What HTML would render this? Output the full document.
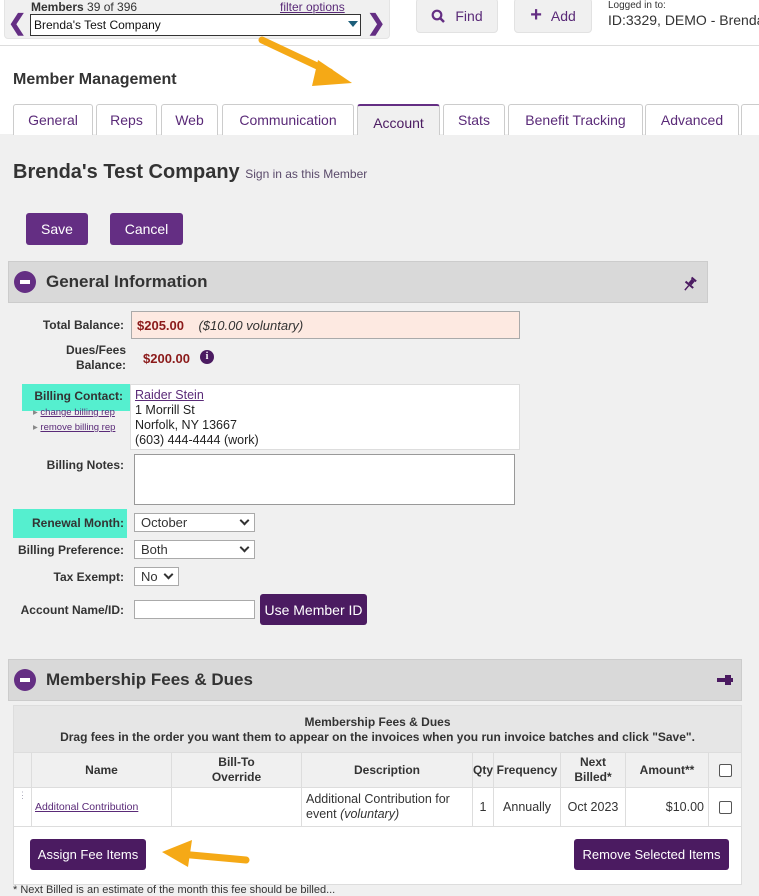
<!DOCTYPE html>
<html><head><meta charset="utf-8"><style>
*{box-sizing:border-box;margin:0;padding:0}
body{width:759px;height:888px;overflow:hidden;background:#f0f0f0;font-family:"Liberation Sans",Arial,sans-serif;color:#333;position:relative;font-size:13px}
.a{position:absolute}
.hdr{left:0;top:0;width:759px;height:134px;background:#fff}
.btn{background:#642e83;color:#fff;border-radius:3px;display:flex;align-items:center;justify-content:center;font-size:14px}
.dbtn{background:#4b1b61;color:#fff;border-radius:3px;display:flex;align-items:center;justify-content:center;font-size:14px}
.tab{top:104px;height:31px;border:1px solid #ccc;border-bottom:none;background:#fff;color:#5a2a78;font-size:14px;display:flex;align-items:center;justify-content:center;border-radius:3px 3px 0 0}
.lbl{font-weight:bold;font-size:12px;text-align:right;color:#333}
.sec{background:#d9d9d9;border:1px solid #ccc;display:flex;align-items:center;font-size:17px;font-weight:bold;color:#333}
.circ{width:22px;height:22px;border-radius:50%;background:#642e83;margin:0 10px 0 5px;position:relative}
.circ:after{content:"";position:absolute;left:6px;top:9px;width:10px;height:4px;background:#fff}
.sel{background:#fff;border:1px solid #aaa;font-size:13px;padding-left:6px;display:flex;align-items:center;justify-content:space-between;padding-right:6px}
.sel span.c{width:7px;height:7px;border-right:2px solid #333;border-bottom:2px solid #333;transform:rotate(45deg);margin-top:-4px}
table{border-collapse:collapse;font-size:12px}
td,th{border:1px solid #ddd}
</style></head><body>
<div class="a hdr"></div>
<div class="a" style="left:0;top:45px;width:759px;height:1px;background:#ddd"></div>
<div class="a" style="left:4px;top:-4px;width:386px;height:43px;background:#f0f0f0;border-radius:4px;border:1px solid #e4e4e4"></div>
<div class="a" style="left:31px;top:0px;font-size:12px;color:#333"><b>Members</b> 39 of 396</div>
<div class="a" style="left:280px;top:0px;font-size:12px;color:#5a2a78;text-decoration:underline">filter options</div>
<div class="a" style="left:30px;top:14px;width:331px;height:22px;border:1px solid #333;background:#fff;font-size:12px;padding:3px 3px;color:#111">Brenda's Test Company</div>
<div class="a" style="left:348px;top:21px;width:0;height:0;border-left:5px solid transparent;border-right:5px solid transparent;border-top:6px solid #1d5e7a"></div>
<div class="a" style="left:8px;top:10px;font-size:22px;color:#642e83;font-weight:bold">&#10094;</div>
<div class="a" style="left:367px;top:10px;font-size:22px;color:#642e83;font-weight:bold">&#10095;</div>
<div class="a" style="left:416px;top:-2px;width:82px;height:35px;background:#f0f0f0;border:1px solid #e2e2e2;border-radius:4px;font-size:14px;color:#5a2a78;display:flex;align-items:center;justify-content:center"><svg width="14" height="14" viewBox="0 0 14 14" style="margin-right:10px"><circle cx="6" cy="6" r="4.3" fill="none" stroke="#642e83" stroke-width="2.2"/><path d="M9 9l4 4" stroke="#642e83" stroke-width="2.5"/></svg>Find</div>
<div class="a" style="left:514px;top:-2px;width:78px;height:35px;background:#f0f0f0;border:1px solid #e2e2e2;border-radius:4px;font-size:14px;color:#5a2a78;display:flex;align-items:center;justify-content:center"><span style="font-size:20px;font-weight:bold;margin-right:9px;color:#642e83">+</span>Add</div>
<div class="a" style="left:608px;top:0px;font-size:10px;color:#333">Logged in to:</div>
<div class="a" style="left:608px;top:12px;font-size:14px;color:#333;white-space:nowrap">ID:3329, DEMO - Brenda</div>
<div class="a" style="left:13px;top:71px;font-size:16px;font-weight:bold;color:#333">Member Management</div>
<div class="a tab" style="left:13px;width:80px">General</div>
<div class="a tab" style="left:96px;width:61px">Reps</div>
<div class="a tab" style="left:161px;width:57px">Web</div>
<div class="a tab" style="left:222px;width:132px">Communication</div>
<div class="a tab" style="left:357px;width:83px;background:#f0f0f0;border-top:2px solid #642e83;color:#4b1b61;padding-top:4px;height:31px">Account</div>
<div class="a tab" style="left:443px;width:62px">Stats</div>
<div class="a tab" style="left:508px;width:135px">Benefit Tracking</div>
<div class="a tab" style="left:645px;width:94px">Advanced</div>
<div class="a tab" style="left:741px;width:30px">&nbsp;</div>
<div class="a" style="left:13px;top:161px;font-size:20px;font-weight:bold;color:#333;white-space:nowrap">Brenda's Test Company <span style="font-size:12px;font-weight:normal;color:#5a4a6a">Sign in as this Member</span></div>
<div class="a btn" style="left:26px;top:213px;width:62px;height:32px">Save</div>
<div class="a btn" style="left:110px;top:213px;width:73px;height:32px">Cancel</div>
<div class="a sec" style="left:8px;top:261px;width:700px;height:42px"><div class="circ"></div>General Information</div>
<svg class="a" style="left:682px;top:276px" width="16" height="16" viewBox="0 0 16 16"><g transform="rotate(40 8 8)" fill="#4b1b61"><rect x="5" y="1" width="6" height="2"/><rect x="6" y="3" width="4" height="5"/><rect x="3" y="8" width="10" height="2"/><rect x="7.3" y="10" width="1.4" height="6"/></g></svg>
<div class="a lbl" style="left:20px;top:318px;width:104px">Total Balance:</div>
<div class="a" style="left:131px;top:311px;width:389px;height:28px;background:#fde9e1;border:1px solid #aaa;font-size:13px;padding:6px 5px;color:#333"><b style="color:#8b1a1a">$205.00</b>&nbsp;&nbsp;&nbsp; <i>($10.00 voluntary)</i></div>
<div class="a lbl" style="left:20px;top:343px;width:106px;line-height:15px">Dues/Fees<br>Balance:</div>
<div class="a" style="left:143px;top:351px;font-size:13px;font-weight:bold;color:#8b1a1a">$200.00</div>
<div class="a" style="left:200px;top:350px;width:14px;height:14px;border-radius:50%;background:#4b1b61;color:#fff;font-size:10px;font-weight:bold;text-align:center;line-height:14px;font-family:'Liberation Serif',serif">i</div>
<div class="a" style="left:22px;top:384px;width:109px;height:27px;background:#55efcf"></div>
<div class="a lbl" style="left:22px;top:389px;width:101px">Billing Contact:</div>
<div class="a" style="left:33px;top:405px;font-size:9.5px;color:#5a2a78;line-height:15px"><span style="color:#888">&#9656;</span> <u>change billing rep</u><br><span style="color:#888">&#9656;</span> <u>remove billing rep</u></div>
<div class="a" style="left:130px;top:384px;width:390px;height:66px;background:#fff;border:1px solid #ddd;font-size:12.5px;line-height:15px;padding:3px 4px;color:#222"><u style="color:#5a2a78">Raider Stein</u><br>1 Morrill St<br>Norfolk, NY 13667<br>(603) 444-4444 (work)</div>
<div class="a lbl" style="left:20px;top:458px;width:104px">Billing Notes:</div>
<div class="a" style="left:134px;top:454px;width:381px;height:51px;background:#fff;border:1px solid #999"></div>
<div class="a" style="left:13px;top:509px;width:114px;height:29px;background:#55efcf"></div>
<div class="a lbl" style="left:13px;top:516px;width:111px">Renewal Month:</div>
<div class="a sel" style="left:134px;top:513px;width:121px;height:19px">October<span class="c"></span></div>
<div class="a lbl" style="left:0px;top:543px;width:124px">Billing Preference:</div>
<div class="a sel" style="left:134px;top:540px;width:121px;height:19px">Both<span class="c"></span></div>
<div class="a lbl" style="left:20px;top:570px;width:104px">Tax Exempt:</div>
<div class="a sel" style="left:134px;top:567px;width:45px;height:19px">No<span class="c"></span></div>
<div class="a lbl" style="left:0px;top:603px;width:124px">Account Name/ID:</div>
<div class="a" style="left:134px;top:600px;width:121px;height:19px;background:#fff;border:1px solid #aaa"></div>
<div class="a dbtn" style="left:260px;top:594px;width:107px;height:31px">Use Member ID</div>
<div class="a sec" style="left:8px;top:659px;width:734px;height:42px"><div class="circ"></div>Membership Fees &amp; Dues</div>
<div class="a" style="left:717px;top:678px;width:16px;height:4px;background:#4b1b61"></div>
<div class="a" style="left:725px;top:675px;width:6px;height:10px;background:#4b1b61"></div>
<div class="a" style="left:13px;top:705px;width:729px;height:180px;background:#fff;border:1px solid #ddd"></div>
<table class="a" style="left:13px;top:705px;width:729px;color:#333">
<tr style="background:#e6e6e6"><th colspan="9" style="height:47px;font-size:12px;line-height:15px;padding-top:2px">Membership Fees &amp; Dues<br>Drag fees in the order you want them to appear on the invoices when you run invoice batches and click "Save".</th></tr>
<tr style="background:#f0f0f0;line-height:15px;height:35px"><th style="width:18px"></th><th style="width:140px">Name</th><th style="width:130px">Bill-To<br>Override</th><th style="width:171px">Description</th><th style="width:20px">Qty</th><th style="width:67px">Frequency</th><th style="width:65px">Next<br>Billed*</th><th style="width:83px">Amount**</th><th><div style="width:13px;height:13px;border:1px solid #555;border-radius:2px;margin:auto;background:#fff"></div></th></tr>
<tr style="background:#fff;height:39px;font-size:12.5px;line-height:15px"><td style="color:#aab;font-size:9px;vertical-align:top;padding-left:4px">&#8942;</td><td style="padding-left:3px;font-size:10.5px"><u style="color:#5a2a78">Additonal Contribution</u></td><td></td><td style="padding-left:4px">Additional Contribution for event <i>(voluntary)</i></td><td style="text-align:center">1</td><td style="text-align:center">Annually</td><td style="text-align:center">Oct 2023</td><td style="text-align:right;padding-right:4px">$10.00</td><td><div style="width:13px;height:13px;border:1px solid #555;border-radius:2px;margin:auto"></div></td></tr>
</table>
<div class="a dbtn" style="left:30px;top:839px;width:116px;height:31px;font-size:13px">Assign Fee Items</div>
<div class="a dbtn" style="left:574px;top:839px;width:155px;height:31px;font-size:13px">Remove Selected Items</div>
<div class="a" style="left:13px;top:884px;font-size:11px;color:#333">* Next Billed is an estimate of the month this fee should be billed...</div>
<svg class="a" style="left:0;top:0" width="759" height="888">
<g stroke="#f5a916" stroke-width="7" stroke-linecap="round" fill="#f5a916">
<line x1="262" y1="40" x2="330" y2="72"/>
<line x1="246" y1="860" x2="180" y2="854"/>
</g>
<polygon points="318,60 352,83 312,86" fill="#f5a916"/>
<polygon points="192,840 162,852 188,867" fill="#f5a916"/>
</svg>
</body></html>
